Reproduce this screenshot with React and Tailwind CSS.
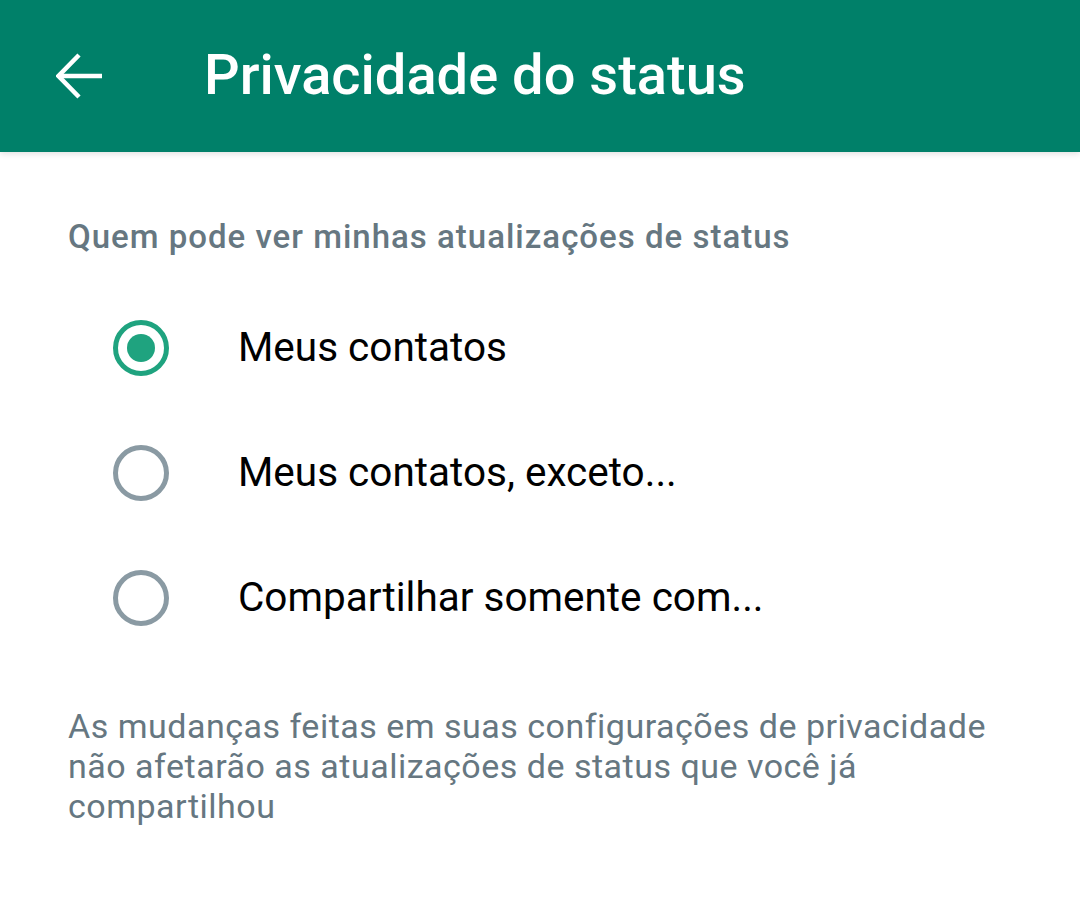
export default function App() {
  const options = [
    { label: "Meus contatos", checked: true },
    { label: "Meus contatos, exceto...", checked: false },
    { label: "Compartilhar somente com...", checked: false },
  ];
  return (
    <div className="w-[1080px] h-[915px] bg-white overflow-hidden" style={{ fontFamily: "Roboto, 'Noto Sans', sans-serif" }}>
      <header className="h-[152px] bg-[#008069] flex items-center shadow-[0_2px_6px_rgba(0,0,0,0.12)] relative">
        <div className="w-[204px] flex items-center pl-[56px]">
          <svg width="46" height="46" viewBox="0 0 46 46" fill="none" stroke="white" strokeWidth="4.5" strokeLinecap="butt" strokeLinejoin="miter">
            <path d="M46 23H3" />
            <path d="M23 2L2.5 23L23 44" />
          </svg>
        </div>
        <h1 className="text-white text-[56px] font-medium leading-none -mt-[3px]">Privacidade do status</h1>
      </header>
      <main className="px-[68px]">
        <div className="pt-[67px] text-[#667781] text-[33px] tracking-[1px] font-medium leading-[36px] whitespace-nowrap">
          Quem pode ver minhas atualizações de status
        </div>
        <div className="mt-[30px] flex flex-col">
          {options.map((o) => (
            <div key={o.label} className="h-[125px] flex items-center">
              <div className="w-[170px] flex items-center pl-[45px]">
                {o.checked ? (
                  <div className="w-[56px] h-[56px] rounded-full border-[5px] border-[#1fa37f] flex items-center justify-center">
                    <div className="w-[28px] h-[28px] rounded-full bg-[#1fa37f]" />
                  </div>
                ) : (
                  <div className="w-[56px] h-[56px] rounded-full border-[5px] border-[#8a9aa3]" />
                )}
              </div>
              <span className="text-[40.5px] text-black leading-none">{o.label}</span>
            </div>
          ))}
        </div>
        <p className="mt-[46px] text-[#667781] text-[34px] tracking-[0.5px] leading-[40px] w-[945px]">
          As mudanças feitas em suas configurações de privacidade não afetarão as atualizações de status que você já compartilhou
        </p>
      </main>
    </div>
  );
}
